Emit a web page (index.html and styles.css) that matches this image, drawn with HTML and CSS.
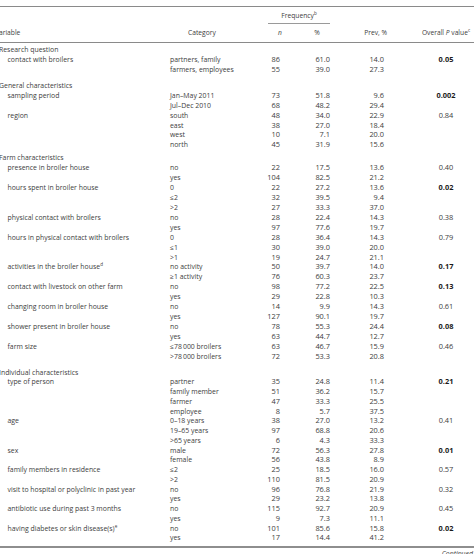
FILE: index.html
```html
<!DOCTYPE html>
<html lang="en">
<head>
<meta charset="utf-8">
<title>Table</title>
<link rel="stylesheet" href="styles.css">
</head>
<body>
<div class="page">
<table class="data">
<colgroup>
<col class="c-var"><col class="c-cat"><col class="c-n"><col class="c-pct"><col class="c-prev"><col class="c-p">
</colgroup>
<thead>
<tr class="h1"><th></th><th></th><th colspan="2" class="freq"><span class="freq-label">Frequency<sup>b</sup></span></th><th></th><th></th></tr>
<tr class="h2"><th class="var var-head">Variable</th><th class="cat cat-head">Category</th><th class="n n-head"><i>n</i></th><th class="pct pct-head">%</th><th class="prev prev-head">Prev, %</th><th class="p">Overall <i>P</i> value<sup>c</sup></th></tr>
</thead>
<tbody class="sec sec-a">
<tr class="sec-head"><td colspan="6">Research question</td></tr>
<tr><td class="var">contact with broilers</td><td class="cat">partners, family</td><td class="n">86</td><td class="pct">61.0</td><td class="prev">14.0</td><td class="p"><b>0.05</b></td></tr>
<tr><td class="var"></td><td class="cat">farmers, employees</td><td class="n">55</td><td class="pct">39.0</td><td class="prev">27.3</td><td class="p"></td></tr>
</tbody>
<tbody class="sec sec-b">
<tr class="sec-head"><td colspan="6">General characteristics</td></tr>
<tr><td class="var">sampling period</td><td class="cat">Jan–May 2011</td><td class="n">73</td><td class="pct">51.8</td><td class="prev">9.6</td><td class="p"><b>0.002</b></td></tr>
<tr><td class="var"></td><td class="cat">Jul–Dec 2010</td><td class="n">68</td><td class="pct">48.2</td><td class="prev">29.4</td><td class="p"></td></tr>
<tr><td class="var">region</td><td class="cat">south</td><td class="n">48</td><td class="pct">34.0</td><td class="prev">22.9</td><td class="p">0.84</td></tr>
<tr><td class="var"></td><td class="cat">east</td><td class="n">38</td><td class="pct">27.0</td><td class="prev">18.4</td><td class="p"></td></tr>
<tr><td class="var"></td><td class="cat">west</td><td class="n">10</td><td class="pct">7.1</td><td class="prev">20.0</td><td class="p"></td></tr>
<tr><td class="var"></td><td class="cat">north</td><td class="n">45</td><td class="pct">31.9</td><td class="prev">15.6</td><td class="p"></td></tr>
</tbody>
<tbody class="sec sec-c">
<tr class="sec-head"><td colspan="6">Farm characteristics</td></tr>
<tr><td class="var">presence in broiler house</td><td class="cat">no</td><td class="n">22</td><td class="pct">17.5</td><td class="prev">13.6</td><td class="p">0.40</td></tr>
<tr><td class="var"></td><td class="cat">yes</td><td class="n">104</td><td class="pct">82.5</td><td class="prev">21.2</td><td class="p"></td></tr>
<tr><td class="var">hours spent in broiler house</td><td class="cat">0</td><td class="n">22</td><td class="pct">27.2</td><td class="prev">13.6</td><td class="p"><b>0.02</b></td></tr>
<tr><td class="var"></td><td class="cat">≤2</td><td class="n">32</td><td class="pct">39.5</td><td class="prev">9.4</td><td class="p"></td></tr>
<tr><td class="var"></td><td class="cat">&gt;2</td><td class="n">27</td><td class="pct">33.3</td><td class="prev">37.0</td><td class="p"></td></tr>
<tr><td class="var">physical contact with broilers</td><td class="cat">no</td><td class="n">28</td><td class="pct">22.4</td><td class="prev">14.3</td><td class="p">0.38</td></tr>
<tr><td class="var"></td><td class="cat">yes</td><td class="n">97</td><td class="pct">77.6</td><td class="prev">19.7</td><td class="p"></td></tr>
<tr><td class="var">hours in physical contact with broilers</td><td class="cat">0</td><td class="n">28</td><td class="pct">36.4</td><td class="prev">14.3</td><td class="p">0.79</td></tr>
<tr><td class="var"></td><td class="cat">≤1</td><td class="n">30</td><td class="pct">39.0</td><td class="prev">20.0</td><td class="p"></td></tr>
<tr><td class="var"></td><td class="cat">&gt;1</td><td class="n">19</td><td class="pct">24.7</td><td class="prev">21.1</td><td class="p"></td></tr>
<tr><td class="var">activities in the broiler house<sup>d</sup></td><td class="cat">no activity</td><td class="n">50</td><td class="pct">39.7</td><td class="prev">14.0</td><td class="p"><b>0.17</b></td></tr>
<tr><td class="var"></td><td class="cat">≥1 activity</td><td class="n">76</td><td class="pct">60.3</td><td class="prev">23.7</td><td class="p"></td></tr>
<tr><td class="var">contact with livestock on other farm</td><td class="cat">no</td><td class="n">98</td><td class="pct">77.2</td><td class="prev">22.5</td><td class="p"><b>0.13</b></td></tr>
<tr><td class="var"></td><td class="cat">yes</td><td class="n">29</td><td class="pct">22.8</td><td class="prev">10.3</td><td class="p"></td></tr>
<tr><td class="var">changing room in broiler house</td><td class="cat">no</td><td class="n">14</td><td class="pct">9.9</td><td class="prev">14.3</td><td class="p">0.61</td></tr>
<tr><td class="var"></td><td class="cat">yes</td><td class="n">127</td><td class="pct">90.1</td><td class="prev">19.7</td><td class="p"></td></tr>
<tr><td class="var">shower present in broiler house</td><td class="cat">no</td><td class="n">78</td><td class="pct">55.3</td><td class="prev">24.4</td><td class="p"><b>0.08</b></td></tr>
<tr><td class="var"></td><td class="cat">yes</td><td class="n">63</td><td class="pct">44.7</td><td class="prev">12.7</td><td class="p"></td></tr>
<tr><td class="var">farm size</td><td class="cat">≤78&#8201;000 broilers</td><td class="n">63</td><td class="pct">46.7</td><td class="prev">15.9</td><td class="p">0.46</td></tr>
<tr><td class="var"></td><td class="cat">&gt;78&#8201;000 broilers</td><td class="n">72</td><td class="pct">53.3</td><td class="prev">20.8</td><td class="p"></td></tr>
</tbody>
<tbody class="sec sec-d">
<tr class="sec-head"><td colspan="6">Individual characteristics</td></tr>
<tr><td class="var">type of person</td><td class="cat">partner</td><td class="n">35</td><td class="pct">24.8</td><td class="prev">11.4</td><td class="p"><b>0.21</b></td></tr>
<tr><td class="var"></td><td class="cat">family member</td><td class="n">51</td><td class="pct">36.2</td><td class="prev">15.7</td><td class="p"></td></tr>
<tr><td class="var"></td><td class="cat">farmer</td><td class="n">47</td><td class="pct">33.3</td><td class="prev">25.5</td><td class="p"></td></tr>
<tr><td class="var"></td><td class="cat">employee</td><td class="n">8</td><td class="pct">5.7</td><td class="prev">37.5</td><td class="p"></td></tr>
<tr><td class="var">age</td><td class="cat">0–18 years</td><td class="n">38</td><td class="pct">27.0</td><td class="prev">13.2</td><td class="p">0.41</td></tr>
<tr><td class="var"></td><td class="cat">19–65 years</td><td class="n">97</td><td class="pct">68.8</td><td class="prev">20.6</td><td class="p"></td></tr>
<tr><td class="var"></td><td class="cat">&gt;65 years</td><td class="n">6</td><td class="pct">4.3</td><td class="prev">33.3</td><td class="p"></td></tr>
<tr><td class="var">sex</td><td class="cat">male</td><td class="n">72</td><td class="pct">56.3</td><td class="prev">27.8</td><td class="p"><b>0.01</b></td></tr>
<tr><td class="var"></td><td class="cat">female</td><td class="n">56</td><td class="pct">43.8</td><td class="prev">8.9</td><td class="p"></td></tr>
<tr><td class="var">family members in residence</td><td class="cat">≤2</td><td class="n">25</td><td class="pct">18.5</td><td class="prev">16.0</td><td class="p">0.57</td></tr>
<tr><td class="var"></td><td class="cat">&gt;2</td><td class="n">110</td><td class="pct">81.5</td><td class="prev">20.9</td><td class="p"></td></tr>
<tr><td class="var">visit to hospital or polyclinic in past year</td><td class="cat">no</td><td class="n">96</td><td class="pct">76.8</td><td class="prev">21.9</td><td class="p">0.32</td></tr>
<tr><td class="var"></td><td class="cat">yes</td><td class="n">29</td><td class="pct">23.2</td><td class="prev">13.8</td><td class="p"></td></tr>
<tr><td class="var">antibiotic use during past 3 months</td><td class="cat">no</td><td class="n">115</td><td class="pct">92.7</td><td class="prev">20.9</td><td class="p">0.45</td></tr>
<tr><td class="var"></td><td class="cat">yes</td><td class="n">9</td><td class="pct">7.3</td><td class="prev">11.1</td><td class="p"></td></tr>
<tr><td class="var">having diabetes or skin disease(s)<sup>e</sup></td><td class="cat">no</td><td class="n">101</td><td class="pct">85.6</td><td class="prev">15.8</td><td class="p"><b>0.02</b></td></tr>
<tr class="last"><td class="var"></td><td class="cat">yes</td><td class="n">17</td><td class="pct">14.4</td><td class="prev">41.2</td><td class="p"></td></tr>
</tbody>
</table>
<div class="continued">Continued</div>
</div>
</body>
</html>
```

FILE: styles.css
```css
html, body {
  margin: 0;
  padding: 0;
  background: #ffffff;
}

.page {
  width: 474px;
  height: 554px;
  overflow: hidden;
  padding-top: 6px;
  box-sizing: border-box;
  font-family: "Open Sans", "Liberation Sans", sans-serif;
  font-size: 6.9px;
  color: #3c3c3c;
}

.data {
  width: 478px;
  margin-left: -2px;
  table-layout: fixed;
  border-collapse: separate;
  border-spacing: 0;
}

.c-var { width: 172px; }
.c-cat { width: 92px; }
.c-n { width: 36px; }
.c-pct { width: 38px; }
.c-prev { width: 80px; }
.c-p { width: 60px; }

.data th,
.data td {
  padding: 0;
  line-height: 9.9px;
  font-weight: normal;
  white-space: nowrap;
  vertical-align: top;
}

.data th {
  font-size: 6.7px;
}

.data sup {
  font-size: 4.6px;
  line-height: 0;
  vertical-align: 2.8px;
}

/* header */
.h1 th {
  border-top: 1px solid #8a8a8a;
  padding-top: 4px;
  padding-bottom: 4.1px;
}

.freq-label {
  display: block;
  margin: 0 6px;
  padding-bottom: 2px;
  border-bottom: 1px solid #9a9a9a;
  text-align: center;
}

.h2 th {
  padding-bottom: 4px;
  border-bottom: 1px solid #8a8a8a;
}

.var-head {
  text-align: left;
  text-indent: -3px;
}

.cat-head {
  text-align: left;
  padding-left: 18px !important;
}

.n-head { text-align: center; }
.pct-head { text-align: center; }
.prev-head {
  text-align: right;
  padding-right: 29px !important;
}

/* body cells */
td.var {
  padding-left: 9.5px;
  text-align: left;
}

td.cat {
  padding-left: 0;
  text-align: left;
}

td.n,
td.pct,
td.prev,
td.p {
  font-size: 7.4px;
}

td.n {
  text-align: right;
  padding-right: 18px;
}

td.pct {
  text-align: right;
  padding-right: 6px;
}

td.prev {
  text-align: right;
  padding-right: 32px;
}

.data .p {
  text-align: center;
}

.data .p b {
  font-weight: 700;
  color: #1a1a1a;
}

.sec-head td {
  padding-left: 1px;
  text-align: left;
}

.sec-a .sec-head td { padding-top: 2px; }
.sec-b .sec-head td { padding-top: 6.3px; }
.sec-c .sec-head td { padding-top: 3.2px; }
.sec-d .sec-head td { padding-top: 6.2px; }

.sec-d td { line-height: 9.75px; }

.last td {
  padding-bottom: 3px;
  border-bottom: 2px solid #8e8e8e;
}

.continued {
  margin-top: 0.5px;
  text-align: right;
  padding-right: 1px;
  font-style: italic;
  line-height: 9.9px;
}
```
